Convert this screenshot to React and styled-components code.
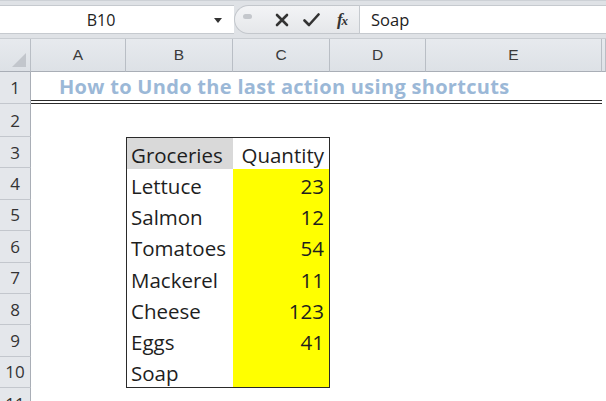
import React from "react";
import styled, { createGlobalStyle } from "styled-components";

const Global = createGlobalStyle`
  html, body { margin: 0; padding: 0; background: #ffffff; }
  body { width: 606px; height: 401px; overflow: hidden; font-family: "Open Sans", "Noto Sans", sans-serif; }
`;

const Frame = styled.div`
  width: 606px;
  height: 401px;
  display: flex;
  flex-direction: column;
  overflow: hidden;
`;

const Toolbar = styled.div`
  flex-shrink: 0;
  height: 39px;
  box-sizing: border-box;
  background: #dfe2e6;
  border-top: 1px solid #cdd1d6;
  padding: 4px 0 4px;
  display: flex;
  border-bottom: 1px solid #c9cdd2;
`;

const NameBox = styled.div`
  width: 234px;
  background: #ffffff;
  display: flex;
  align-items: center;
  border-top: 1px solid #c6cacf;
  border-bottom: 1px solid #c6cacf;
  box-sizing: border-box;
`;

const NameText = styled.div`
  flex: 1;
  text-align: center;
  font-size: 16px;
  color: #222;
  padding-right: 12px;
`;

const DropArrow = styled.div`
  width: 0;
  height: 0;
  border-left: 4px solid transparent;
  border-right: 4px solid transparent;
  border-top: 5px solid #333;
  margin: 2px 12px 0 0;
`;

const ButtonGroup = styled.div`
  width: 125px;
  display: flex;
  align-items: center;
  background: linear-gradient(#f3f4f6, #e5e7ea);
  border: 1px solid #c3c7cc;
  border-right: none;
  border-radius: 15px 0 0 15px;
  box-sizing: border-box;
  padding-left: 8px;
`;

const Grip = styled.div`
  width: 9px;
  height: 5px;
  border-radius: 3px;
  background: #c4c7cc;
  margin-right: 16px;
  margin-bottom: 6px;
`;

const IconBtn = styled.div`
  width: ${(p) => p.$w}px;
  display: flex;
  align-items: center;
  justify-content: center;
`;

const Fx = styled.span`
  font-family: "Liberation Serif", "DejaVu Serif", serif;
  font-style: italic;
  font-weight: bold;
  font-size: 17px;
  color: #333;
  letter-spacing: -1px;
  & > small { font-size: 13px; }
`;

const FormulaInput = styled.div`
  flex: 1;
  background: #ffffff;
  border: 1px solid #c6cacf;
  border-right: none;
  box-sizing: border-box;
  display: flex;
  align-items: center;
  padding-left: 11px;
  font-size: 16.5px;
  color: #222;
`;

const Sheet = styled.div`
  flex-shrink: 0;
  display: grid;
  grid-template-columns: 31px 95px 107px 97px 96px 176px 1fr;
  grid-template-rows: 33px 32px 33px repeat(9, 31.4px);
  background: #ffffff;
`;

const ColHead = styled.div`
  grid-row: 1;
  grid-column: ${(p) => p.$col};
  background: linear-gradient(#e7eaee, #dde1e6);
  border-right: 1px solid #b9bec5;
  border-bottom: 1px solid #a9aeb6;
  box-sizing: border-box;
  display: flex;
  align-items: center;
  justify-content: center;
  font-family: "Liberation Sans", Arial, sans-serif;
  font-size: 15.5px;
  color: #3a3a3a;
  position: relative;
`;

const CornerMark = styled.div`
  position: absolute;
  right: 4px;
  bottom: 4px;
  width: 0;
  height: 0;
  border-left: 14px solid transparent;
  border-bottom: 14px solid #c2c6cc;
`;

const RowHead = styled.div`
  grid-column: 1;
  grid-row: ${(p) => p.$row};
  background: #e4e7eb;
  border-right: 1px solid #a9aeb6;
  border-bottom: 1px solid #c3c7cd;
  box-sizing: border-box;
  display: flex;
  align-items: center;
  justify-content: center;
  font-size: 17px;
  color: #333;
`;

const Title = styled.div`
  grid-row: 2;
  grid-column: 2 / 7;
  border-bottom: 4px double #2c2c2c;
  box-sizing: border-box;
  display: flex;
  align-items: center;
  padding-left: 28px;
  padding-top: 1px;
  font-size: 20px;
  letter-spacing: 0.3px;
  font-weight: 700;
  color: #9bb8d7;
  white-space: nowrap;
`;

const Table = styled.div`
  grid-column: 3 / 5;
  grid-row: 4 / 12;
  border: 1px solid #2a2a2a;
  box-sizing: border-box;
  display: grid;
  grid-template-columns: 106px 1fr;
  grid-template-rows: repeat(8, 1fr);
`;

const Cell = styled.div`
  display: flex;
  align-items: center;
  justify-content: ${(p) => (p.$num ? "flex-end" : "flex-start")};
  padding: 3px ${(p) => (p.$num ? "5px" : "0")} 0 ${(p) => (p.$num ? "0" : "4px")};
  background: ${(p) => p.$bg || "transparent"};
  font-size: 20.5px;
  color: #1e1e1e;
  white-space: nowrap;
`;

const data = [
  ["Lettuce", 23],
  ["Salmon", 12],
  ["Tomatoes", 54],
  ["Mackerel", 11],
  ["Cheese", 123],
  ["Eggs", 41],
  ["Soap", ""],
];

export default function App() {
  const cols = ["A", "B", "C", "D", "E", ""];
  const rows = [1, 2, 3, 4, 5, 6, 7, 8, 9, 10, 11];
  return (
    <Frame>
      <Global />
      <Toolbar>
        <NameBox>
          <NameText>B10</NameText>
          <DropArrow />
        </NameBox>
        <ButtonGroup>
          <Grip />
          <IconBtn $w={28}>
            <svg width="14" height="14" viewBox="0 0 14 14">
              <path d="M2 2 L12 12 M12 2 L2 12" stroke="#333" strokeWidth="2.6" strokeLinecap="round" />
            </svg>
          </IconBtn>
          <IconBtn $w={30}>
            <svg width="17" height="14" viewBox="0 0 17 14">
              <path d="M1.5 7.5 L6 12 L15.5 1.5" fill="none" stroke="#333" strokeWidth="2.6" strokeLinecap="round" strokeLinejoin="round" />
            </svg>
          </IconBtn>
          <IconBtn $w={32}>
            <Fx>
              f<small>x</small>
            </Fx>
          </IconBtn>
        </ButtonGroup>
        <FormulaInput>Soap</FormulaInput>
      </Toolbar>
      <Sheet>
        <ColHead $col={1}>
          <CornerMark />
        </ColHead>
        {cols.map((c, i) => (
          <ColHead key={i} $col={i + 2}>
            {c}
          </ColHead>
        ))}
        {rows.map((r) => (
          <RowHead key={r} $row={r + 1}>
            {r}
          </RowHead>
        ))}
        <Title>How to Undo the last action using shortcuts</Title>
        <Table>
          <Cell $bg="#d9d9d9">Groceries</Cell>
          <Cell $num>Quantity</Cell>
          {data.map(([name, qty]) => (
            <React.Fragment key={name}>
              <Cell>{name}</Cell>
              <Cell $num $bg="#ffff00">
                {qty}
              </Cell>
            </React.Fragment>
          ))}
        </Table>
      </Sheet>
    </Frame>
  );
}
